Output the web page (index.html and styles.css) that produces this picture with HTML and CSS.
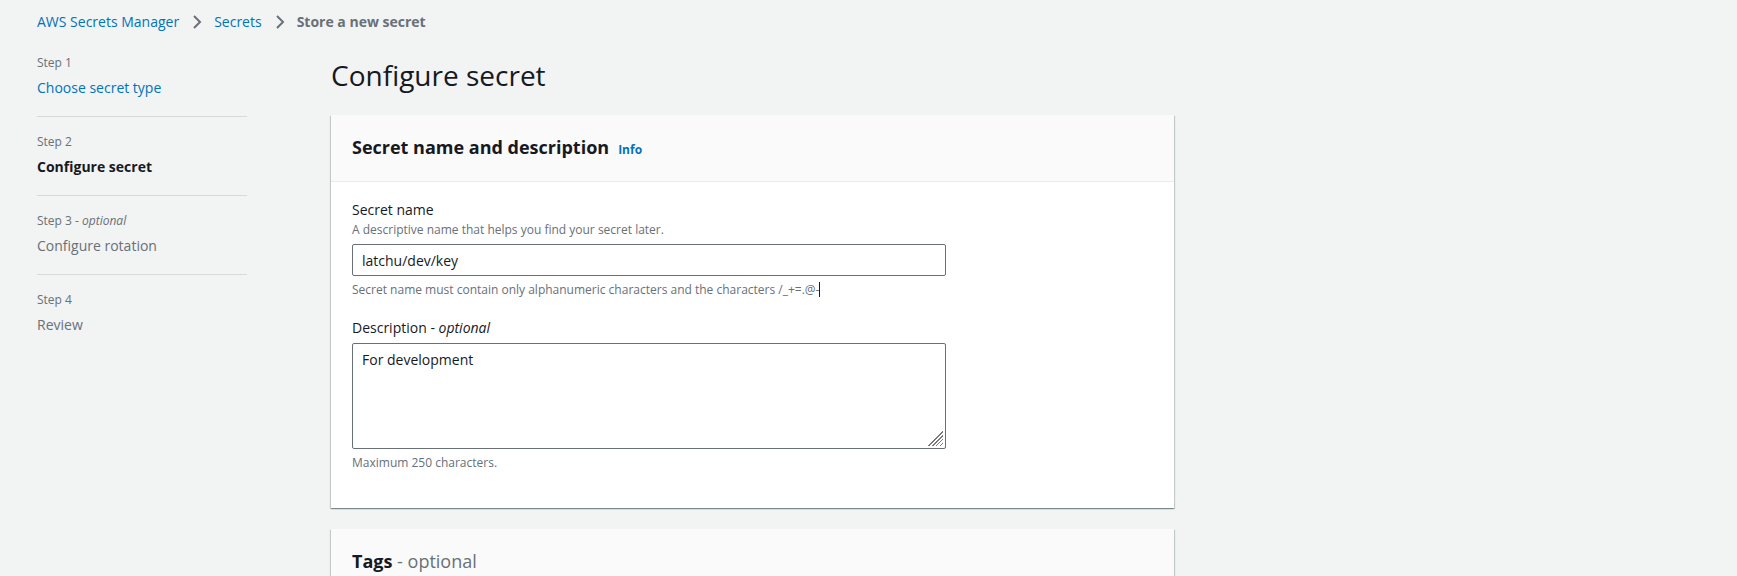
FILE: index.html
```html
<!DOCTYPE html>
<html lang="en">
<head>
    <meta charset="UTF-8">
    <meta name="viewport" content="width=device-width, initial-scale=1.0">
    <title>Store a new secret | AWS Secrets Manager</title>
    <link rel="stylesheet" href="styles.css">
</head>
<body>
    <nav class="breadcrumbs">
        <a href="#">AWS Secrets Manager</a>
        <svg class="chevron" width="16" height="16" viewBox="0 0 16 16"><path d="M5 2l6 6-6 6" fill="none" stroke="currentColor" stroke-width="2"/></svg>
        <a href="#">Secrets</a>
        <svg class="chevron" width="16" height="16" viewBox="0 0 16 16"><path d="M5 2l6 6-6 6" fill="none" stroke="currentColor" stroke-width="2"/></svg>
        <span class="current">Store a new secret</span>
    </nav>

    <div class="layout">
        <ul class="steps">
            <li class="step">
                <div class="step-label">Step 1</div>
                <a href="#" class="step-title link">Choose secret type</a>
            </li>
            <li class="step">
                <div class="step-label">Step 2</div>
                <div class="step-title active">Configure secret</div>
            </li>
            <li class="step">
                <div class="step-label">Step 3 - <i>optional</i></div>
                <div class="step-title">Configure rotation</div>
            </li>
            <li class="step last">
                <div class="step-label">Step 4</div>
                <div class="step-title">Review</div>
            </li>
        </ul>

        <main class="content">
            <h1>Configure secret</h1>

            <section class="card">
                <div class="card-header">
                    <h2>Secret name and description</h2>
                    <a href="#" class="info">Info</a>
                </div>
                <div class="card-body">
                    <div class="field">
                        <label for="secretName">Secret name</label>
                        <div class="field-desc">A descriptive name that helps you find your secret later.</div>
                        <input type="text" id="secretName" value="latchu/dev/key">
                        <div class="field-hint">Secret name must contain only alphanumeric characters and the characters /_+=.@-<span class="caret"></span></div>
                    </div>
                    <div class="field">
                        <label for="description">Description - <i>optional</i></label>
                        <textarea id="description">For development</textarea>
                        <div class="field-hint">Maximum 250 characters.</div>
                    </div>
                </div>
            </section>

            <section class="card">
                <div class="card-header">
                    <h2>Tags <span class="optional">- optional</span></h2>
                </div>
                <div class="card-body tall"></div>
            </section>
        </main>
    </div>
</body>
</html>
```

FILE: styles.css
```css
body {
    margin: 0;
    font-family: "Open Sans", "Liberation Sans", sans-serif;
    font-size: 14px;
    background-color: #f2f3f3;
    color: #16191f;
}
a {
    color: #0073bb;
    text-decoration: none;
}
.breadcrumbs {
    display: flex;
    align-items: center;
    height: 20px;
    padding: 12px 37px 6px;
    line-height: 20px;
}
.breadcrumbs .chevron {
    color: #687078;
    margin: 0 9px 0 10px;
}
.breadcrumbs .current {
    color: #687078;
    font-weight: bold;
}
.layout {
    display: flex;
    padding-left: 37px;
}
.steps {
    list-style: none;
    margin: 0;
    padding: 0;
    width: 210px;
    flex-shrink: 0;
}
.step {
    padding: 17px 0;
    border-bottom: 1px solid #d5dbdb;
}
.step.last {
    border-bottom: none;
}
.step-label {
    font-size: 12px;
    line-height: 16px;
    color: #687078;
    margin-bottom: 6px;
}
.step-title {
    display: block;
    font-size: 14px;
    line-height: 22px;
    color: #687078;
}
.step-title.link {
    color: #0073bb;
}
.step-title.active {
    color: #16191f;
    font-weight: bold;
}
.content {
    margin-left: 84px;
    width: 843px;
}
h1 {
    font-size: 28px;
    font-weight: normal;
    line-height: 36px;
    margin: 19px 0 22px;
}
.card {
    background-color: #ffffff;
    box-shadow: 0 1px 1px 0 rgba(0, 28, 36, 0.3), 1px 1px 1px 0 rgba(0, 28, 36, 0.15), -1px 1px 1px 0 rgba(0, 28, 36, 0.15);
    margin-bottom: 21px;
}
.card-header {
    display: flex;
    align-items: baseline;
    background-color: #fafafa;
    border-bottom: 1px solid #eaeded;
    padding: 18px 21px 20px;
}
.card-header h2 {
    margin: 0;
    font-size: 18px;
    line-height: 28px;
    font-weight: bold;
}
.card-header .optional {
    font-weight: normal;
    color: #687078;
}
.info {
    font-size: 12px;
    font-weight: bold;
    margin-left: 9px;
}
.card-body {
    padding: 18px 21px 37px;
}
.card-body.tall {
    height: 80px;
}
.field + .field {
    margin-top: 20px;
}
.field label {
    display: block;
    line-height: 20px;
}
.field-desc,
.field-hint {
    font-size: 12px;
    line-height: 16px;
    color: #687078;
}
.field-desc {
    margin-top: 2px;
}
.field-hint {
    margin-top: 6px;
}
.caret {
    display: inline-block;
    width: 1px;
    height: 15px;
    background-color: #16191f;
    vertical-align: -3px;
}
.field input,
.field textarea {
    display: block;
    box-sizing: border-box;
    width: 594px;
    margin-top: 6px;
    font-family: inherit;
    font-size: 14px;
    color: #16191f;
    border: 1px solid #687078;
    border-radius: 2px;
    padding: 4px 9px;
    background-color: #ffffff;
}
.field input {
    height: 32px;
}
.field textarea {
    margin-top: 5px;
    height: 106px;
    line-height: 22px;
    padding-top: 5px;
    resize: none;
    background: #ffffff linear-gradient(135deg, transparent 52%, #7a7a7a 52%, #7a7a7a 57%, transparent 57%, transparent 64%, #7a7a7a 64%, #7a7a7a 69%, transparent 69%, transparent 76%, #7a7a7a 76%, #7a7a7a 81%, transparent 81%, transparent 88%, #7a7a7a 88%, #7a7a7a 93%, transparent 93%) no-repeat right 2px bottom 2px / 16px 16px;
}
```
